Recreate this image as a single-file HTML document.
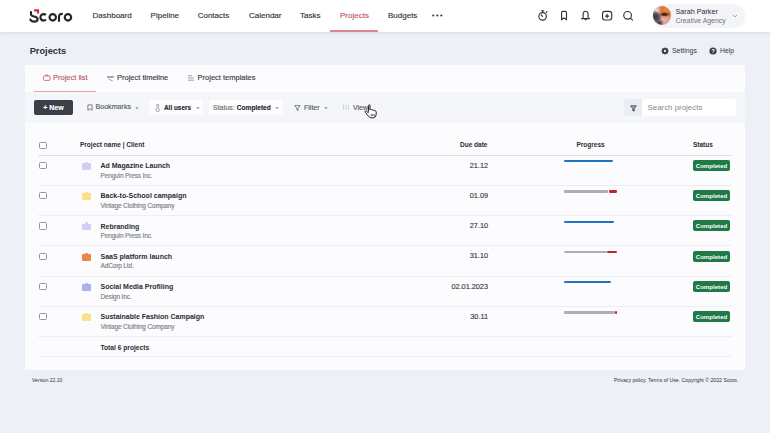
<!DOCTYPE html>
<html><head><meta charset="utf-8">
<style>
*{margin:0;padding:0;box-sizing:border-box}
html,body{width:770px;height:433px;overflow:hidden}
body{background:#edf1f7;font-family:"Liberation Sans",sans-serif;color:#2c2e33;position:relative}
.a{position:absolute;white-space:nowrap}
.nav,.tab,.btn,.cl,.dd,.tx{-webkit-text-stroke:0.15px currentColor}
#top{position:absolute;left:0;top:0;width:770px;height:32px;background:#fff;box-shadow:0 1.5px 3px rgba(50,60,90,.10)}
.nav{position:absolute;top:10px;font-size:8px;line-height:11px;color:#34363c}
#card{position:absolute;left:25px;top:64.5px;width:720px;height:305.5px;background:#fcfcfe}
#tb{position:absolute;left:0;top:27.5px;width:720px;height:30.5px;background:#f4f6f9}
.tab{position:absolute;top:8.5px;font-size:7.5px;line-height:10px;color:#3b3d43}
.btn{position:absolute;font-size:7px;line-height:17px;height:16px}
.hd{position:absolute;top:75px;font-size:6.5px;font-weight:bold;line-height:10px;color:#2a2c31}
.cb{position:absolute;width:7.6px;height:7.3px;border:1px solid #92959c;border-radius:1.6px;background:#fff}
.row{position:absolute;left:0;width:720px;height:30.3px}
.ttl{position:absolute;left:75.5px;top:-4.3px;font-size:7px;font-weight:bold;line-height:10px;color:#2a2c31}
.cl{position:absolute;left:75.5px;top:5.4px;font-size:6.5px;letter-spacing:-0.14px;line-height:9px;color:#7d8087}
.fd{position:absolute;left:56.5px;top:-2.3px;width:9.4px;height:6.9px;border-radius:1px}
.fd::before{content:"";position:absolute;left:3.1px;top:-1.2px;width:3.2px;height:1.4px;border-radius:.8px .8px 0 0;background:inherit}
.dd{position:absolute;right:257px;top:-4.8px;font-size:7.3px;line-height:10px;color:#3a3c42;text-align:right}
.pb{position:absolute;left:539px;top:-5.3px;height:2.4px;border-radius:1.2px}
.st{position:absolute;left:668px;top:-5.5px;width:37px;height:11px;background:#1f7a47;border-radius:2px;color:#fff;font-size:6.1px;font-weight:bold;line-height:11px;text-align:center}
.div{position:absolute;left:13px;width:694px;height:1px;background:#eceef4}
</style></head><body>
<div id="top">
  <svg class="a" style="left:28px;top:8px" width="46" height="16" viewBox="28 8 46 16" fill="none" stroke="#23262d" stroke-width="2.15">
    <path d="M31 12.1V14.3C31 15.5 32.2 16.1 34.2 16.5C36.6 17 37.7 17.9 37.7 19.2C37.7 20.7 36.2 21.6 34.2 21.6C32.4 21.6 31 20.9 30.4 19.6" stroke-linecap="round"/>
    <path d="M45.9 15.1A3.2 3.2 0 1 0 45.9 19.6"/>
    <circle cx="52.75" cy="17.35" r="3.2"/>
    <path d="M59 21.8V16.8C59 14.7 60.5 13.7 62.8 13.9"/>
    <circle cx="67.95" cy="17.35" r="3.2"/>
    <path d="M34.1 10.4H38V13.5" stroke="#c8303a" stroke-width="2.2" stroke-linecap="butt"/>
  </svg>
  <div class="nav" style="left:92.5px">Dashboard</div>
  <div class="nav" style="left:150.6px">Pipeline</div>
  <div class="nav" style="left:197.7px">Contacts</div>
  <div class="nav" style="left:249px">Calendar</div>
  <div class="nav" style="left:300px">Tasks</div>
  <div class="nav" style="left:340px;color:#bf5468">Projects</div>
  <div class="a" style="left:330px;top:30.4px;width:48px;height:1.3px;background:#da8793"></div>
  <div class="nav" style="left:388px">Budgets</div>
  <svg class="a" style="left:432px;top:14px" width="11" height="3" viewBox="0 0 11 3" fill="#34363c"><circle cx="1.3" cy="1.5" r="1.1"/><circle cx="5.3" cy="1.5" r="1.1"/><circle cx="9.3" cy="1.5" r="1.1"/></svg>
  <!-- icons -->
  <svg class="a" style="left:530px;top:6px" width="110" height="20" viewBox="530 6 110 20" fill="none" stroke="#30333a" stroke-width="1.15" stroke-linecap="round" stroke-linejoin="round">
    <circle cx="542.6" cy="16.35" r="3.75"/>
    <path d="M541.5 10.7h2.2M542.6 10.7v1.8M546.2 12.3l.7-.7M542.6 16.3l-1.4-1.3"/>
    <path d="M561.6 12.6c0-.8.5-1.3 1.3-1.3h2.3c.8 0 1.3.5 1.3 1.3V19.8l-2.45-1.9-2.45 1.9z"/>
    <path d="M583.1 18.5v-3.8c0-2.2 1-3.4 2.5-3.4s2.5 1.2 2.5 3.4v3.8M581.6 18.6h7.9"/>
    <path d="M585.1 19.6h1" stroke-width="1.3"/>
    <rect x="602.5" y="11.3" width="9.2" height="8.7" rx="2.4"/>
    <path d="M607.1 14.4v3.2M605.5 16h3.2" stroke-width="1.25"/>
    <circle cx="627.6" cy="15.3" r="3.85"/>
    <path d="M630.4 18.1l2.1 2"/>
  </svg>
  <!-- user -->
  <div class="a" style="left:651.5px;top:3.7px;width:93px;height:24.2px;border-radius:12px;background:#f3f4f8"></div>
  <div class="a" style="left:653px;top:6.45px;width:18.4px;height:18.4px;border-radius:50%;overflow:hidden;background:radial-gradient(ellipse 30% 12% at 64% 44%,#2a2224 30%,rgba(42,34,36,0) 100%),radial-gradient(circle at 72% 22%,#f08838 0,#e07030 22%,rgba(224,112,48,0) 45%),radial-gradient(circle at 14% 58%,#3a3a3e 0,#505056 18%,rgba(80,80,86,0) 34%),radial-gradient(circle at 26% 24%,#e8e6ea 0,rgba(232,230,234,0) 30%),radial-gradient(circle at 36% 90%,#3a2a2c 0,rgba(58,42,44,0) 22%),radial-gradient(circle at 60% 70%,#e8b4a8 0,#d89890 40%,#c07870 100%)"></div>
  <div class="a" style="left:675.5px;top:6.8px;font-size:7.2px;line-height:9px;color:#2a2c31">Sarah Parker</div>
  <div class="a" style="left:675.5px;top:15.6px;font-size:6.9px;line-height:9px;color:#72757c">Creative Agency</div>
  <svg class="a" style="left:732px;top:14px" width="6" height="4" viewBox="0 0 6 4" fill="none" stroke="#9a9da4" stroke-width="0.8"><path d="M1 1l2 2 2-2"/></svg>
</div>

<div class="a" style="left:29.7px;top:45px;font-size:9.25px;font-weight:bold;line-height:12px;color:#2f3137">Projects</div>
<svg class="a" style="left:661.3px;top:47px" width="8" height="8" viewBox="0 0 8 8"><g fill="#3a3c42"><circle cx="4" cy="4" r="3.05"/><rect x="3.35" y="0.4" width="1.3" height="7.2" rx=".3"/><rect x="3.35" y="0.4" width="1.3" height="7.2" rx=".3" transform="rotate(45 4 4)"/><rect x="3.35" y="0.4" width="1.3" height="7.2" rx=".3" transform="rotate(90 4 4)"/><rect x="3.35" y="0.4" width="1.3" height="7.2" rx=".3" transform="rotate(135 4 4)"/></g><circle cx="4" cy="4" r="1.15" fill="#edf1f7"/></svg>
<div class="a" style="left:672px;top:46px;font-size:6.9px;line-height:9px;color:#34363c">Settings</div>
<svg class="a" style="left:708.6px;top:47px" width="8" height="8" viewBox="0 0 8 8"><circle cx="4" cy="4" r="3.6" fill="#3a3c42"/><text x="4" y="6.2" font-size="6" font-weight="bold" text-anchor="middle" fill="#fff" font-family="Liberation Sans">?</text></svg>
<div class="a" style="left:720px;top:46px;font-size:6.8px;line-height:9px;color:#34363c">Help</div>

<div id="card">
  <!-- tabs -->
  <svg class="a" style="left:17.5px;top:9.5px" width="8" height="7" viewBox="0 0 8 7" fill="none" stroke="#c46878" stroke-width="0.85"><rect x="0.5" y="2" width="6.6" height="4.4" rx="0.9"/><path d="M2.6 2V1.1h2.4V2"/></svg>
  <div class="tab" style="left:28px;color:#bb5a6c">Project list</div>
  <div class="a" style="left:9px;top:26.5px;width:62px;height:1.4px;background:#e3a2ac"></div>
  <svg class="a" style="left:82px;top:10.5px" width="8" height="7" viewBox="0 0 8 7" fill="none" stroke="#8a8d94"><path d="M0 2h6.8" stroke-width="1.5"/><path d="M1.3 4.2l1.8.5M3.2 5l2.6.8" stroke-width="0.8"/></svg>
  <div class="tab" style="left:92px">Project timeline</div>
  <svg class="a" style="left:163px;top:10.5px" width="6" height="6" viewBox="0 0 6 6" fill="none" stroke="#7a7d84" stroke-width="0.7"><path d="M0 .8h4M0 3h6M0 5.2h6"/></svg>
  <div class="tab" style="left:172.6px">Project templates</div>

  <div id="tb">
    <div class="btn" style="left:9px;top:8.1px;width:39px;height:15.3px;line-height:16.2px;background:#3b3f47;border-radius:2px;color:#fff;font-weight:bold;text-align:center">+ New</div>
    <svg class="a" style="left:61.5px;top:12.2px" width="6" height="7" viewBox="0 0 6 7" fill="none" stroke="#6a6d74" stroke-width="0.85" stroke-linejoin="round"><path d="M.9 .9h4.2v5.4L3 4.7.9 6.3z"/></svg>
    <div class="btn" style="left:70.5px;top:7px;color:#5a5d64;font-size:7.1px">Bookmarks</div>
    <svg class="a" style="left:110px;top:14.5px" width="4" height="3" viewBox="0 0 4 3"><path d="M.3 .3h3.4L2 2.3z" fill="#8a8d94"/></svg>
    <div class="a" style="left:124px;top:7.8px;width:54px;height:15px;background:#fdfdfe;border-radius:2.5px"></div>
    <svg class="a" style="left:129.8px;top:12.2px" width="6" height="8" viewBox="0 0 6 8" fill="none" stroke="#7d8087" stroke-width="0.8"><circle cx="2.7" cy="1.5" r="1.15"/><path d="M1 5.9C1 4.8 1.7 4 2.7 4S4.4 4.8 4.4 5.9 3.7 7.6 2.7 7.6 1 7 1 5.9z"/></svg>
    <div class="btn" style="left:139px;top:7px;font-weight:bold;color:#2a2c31;font-size:6.4px">All users</div>
    <svg class="a" style="left:170.5px;top:14.5px" width="4" height="3" viewBox="0 0 4 3"><path d="M.3 .3h3.4L2 2.3z" fill="#8a8d94"/></svg>
    <div class="a" style="left:184px;top:7.8px;width:74px;height:15px;background:#fdfdfe;border-radius:2.5px"></div>
    <div class="btn" style="left:188px;top:7px;color:#6a6d74">Status: <b style="color:#2a2c31;font-size:6.6px">Completed</b></div>
    <svg class="a" style="left:250px;top:14.5px" width="4" height="3" viewBox="0 0 4 3"><path d="M.3 .3h3.4L2 2.3z" fill="#8a8d94"/></svg>
    <svg class="a" style="left:268.8px;top:12.8px" width="7" height="6" viewBox="0 0 7 6" fill="none" stroke="#6a6d74" stroke-width="0.85" stroke-linejoin="round"><path d="M.6 .6h5.6L4.1 3.1v2.4L2.8 4.9V3.1z"/></svg>
    <div class="btn" style="left:279px;top:7px;color:#5a5d64">Filter</div>
    <svg class="a" style="left:299px;top:14.5px" width="4" height="3" viewBox="0 0 4 3"><path d="M.3 .3h3.4L2 2.3z" fill="#8a8d94"/></svg>
    <svg class="a" style="left:318px;top:13px" width="6" height="5" viewBox="0 0 6 5" fill="none" stroke="#9a9da4" stroke-width="0.7" stroke-dasharray="1 .6"><path d="M.4 0v5M3 0v5M5.6 0v5"/></svg>
    <div class="btn" style="left:328px;top:7px;color:#5a5d64">View</div>
    <!-- cursor -->
    <svg class="a" style="left:339.3px;top:11.7px" width="16" height="16" viewBox="0 0 16 16"><g transform="translate(-0.3 -0.2) rotate(4 7 9)"><path d="M4.5 1.6C4.5.9 5.9.9 5.9 1.6V5.9C6.3 5.4 7.4 5.4 7.6 6.1C8 5.6 9.1 5.6 9.3 6.4C9.7 6.1 10.8 6.1 11 6.9C11.4 6.7 12.5 6.9 12.5 7.9V10.3C12.5 12.4 11.3 13.9 9.1 13.9H7.5C6.4 13.9 5.7 13.4 5.1 12.5L1.5 8.8C.9 8.1 1.7 7 2.6 7.6L4.5 9.1Z" fill="#fff" stroke="#1a1a1a" stroke-width="0.95" stroke-linejoin="round"/><path d="M7.7 10.1v2.2M9.2 10.1v2.2M10.7 10.1v2.2" stroke="#1a1a1a" stroke-width="0.65"/></g></svg>
    <!-- right -->
    <div class="a" style="left:599px;top:6.5px;width:18px;height:17.5px;background:#e9edf4;border-radius:2px 0 0 2px"></div>
    <svg class="a" style="left:604.5px;top:12.5px" width="7" height="7" viewBox="0 0 7 7" fill="#b8bcc4" stroke="#45484f" stroke-width="1" stroke-linejoin="round"><path d="M.7 .9h5.6L4.2 3.4v2.7L2.8 5.5V3.4z"/></svg>
    <div class="a" style="left:617px;top:6.5px;width:94px;height:17.5px;background:#fff;border-radius:0 2px 2px 0"></div>
    <div class="a" style="left:622.5px;top:10.5px;font-size:7.9px;line-height:10px;color:#85888f">Search projects</div>
  </div>

  <!-- table header -->
  <div class="cb" style="left:14.2px;top:77px"></div>
  <div class="hd" style="left:55px">Project name | Client</div>
  <div class="hd" style="left:435px">Due date</div>
  <div class="hd" style="left:551.5px">Progress</div>
  <div class="hd" style="left:668px">Status</div>
  <div class="a" style="left:13px;top:90px;width:694px;height:1px;background:#dde0e8"></div>

  <div class="row" style="top:100.8px">
    <div class="cb" style="left:14.2px;top:-3.5px"></div>
    <div class="fd" style="background:#d6ccf8"></div>
    <div class="ttl">Ad Magazine Launch</div>
    <div class="cl">Penguin Press Inc.</div>
    <div class="dd">21.12</div>
    <div class="pb" style="width:49px;background:#1f72c4"></div>
    <div class="st">Completed</div>
    <div class="div" style="top:19.5px"></div>
  </div>
  <div class="row" style="top:131.05px">
    <div class="cb" style="left:14.2px;top:-3.5px"></div>
    <div class="fd" style="background:#fbe08a"></div>
    <div class="ttl">Back-to-School campaign</div>
    <div class="cl">Vintage Clothing Company</div>
    <div class="dd">01.09</div>
    <div class="pb" style="width:44px;background:#aaaeb7"></div>
    <div class="pb" style="left:584px;width:8px;background:#c6222c"></div>
    <div class="st">Completed</div>
    <div class="div" style="top:19.5px"></div>
  </div>
  <div class="row" style="top:161.3px">
    <div class="cb" style="left:14.2px;top:-3.5px"></div>
    <div class="fd" style="background:#d6ccf8"></div>
    <div class="ttl">Rebranding</div>
    <div class="cl">Penguin Press Inc.</div>
    <div class="dd">27.10</div>
    <div class="pb" style="width:50px;background:#1f72c4"></div>
    <div class="st">Completed</div>
    <div class="div" style="top:19.5px"></div>
  </div>
  <div class="row" style="top:191.55px">
    <div class="cb" style="left:14.2px;top:-3.5px"></div>
    <div class="fd" style="background:#e8884a"></div>
    <div class="ttl">SaaS platform launch</div>
    <div class="cl">AdCorp Ltd.</div>
    <div class="dd">31.10</div>
    <div class="pb" style="width:43px;background:#aaaeb7"></div>
    <div class="pb" style="left:582px;width:10px;background:#c6222c"></div>
    <div class="st">Completed</div>
    <div class="div" style="top:19.5px"></div>
  </div>
  <div class="row" style="top:221.8px">
    <div class="cb" style="left:14.2px;top:-3.5px"></div>
    <div class="fd" style="background:#a9b2ea"></div>
    <div class="ttl">Social Media Profiling</div>
    <div class="cl">Design Inc.</div>
    <div class="dd">02.01.2023</div>
    <div class="pb" style="width:47px;background:#1f72c4"></div>
    <div class="st">Completed</div>
    <div class="div" style="top:19.5px"></div>
  </div>
  <div class="row" style="top:252.05px">
    <div class="cb" style="left:14.2px;top:-3.5px"></div>
    <div class="fd" style="background:#fbe08a"></div>
    <div class="ttl">Sustainable Fashion Campaign</div>
    <div class="cl">Vintage Clothing Company</div>
    <div class="dd">30.11</div>
    <div class="pb" style="width:51px;background:#aaaeb7"></div>
    <div class="pb" style="left:590px;width:2px;background:#c6222c"></div>
    <div class="st">Completed</div>
    <div class="div" style="top:19.5px"></div>
  </div>
  <div class="row" style="top:282.3px">
    <div class="ttl" style="font-size:6.65px">Total 6 projects</div>
    <div class="div" style="top:9.5px"></div>
  </div>
</div>

<div class="a" style="left:32px;top:377px;font-size:4.95px;line-height:8px;color:#2e3036">Version 22.10</div>
<div class="a" style="left:614px;top:376px;font-size:5.2px;line-height:8px;color:#2e3036">Privacy policy. Terms of Use. Copyright © 2022 Scoro.</div>
</body></html>
